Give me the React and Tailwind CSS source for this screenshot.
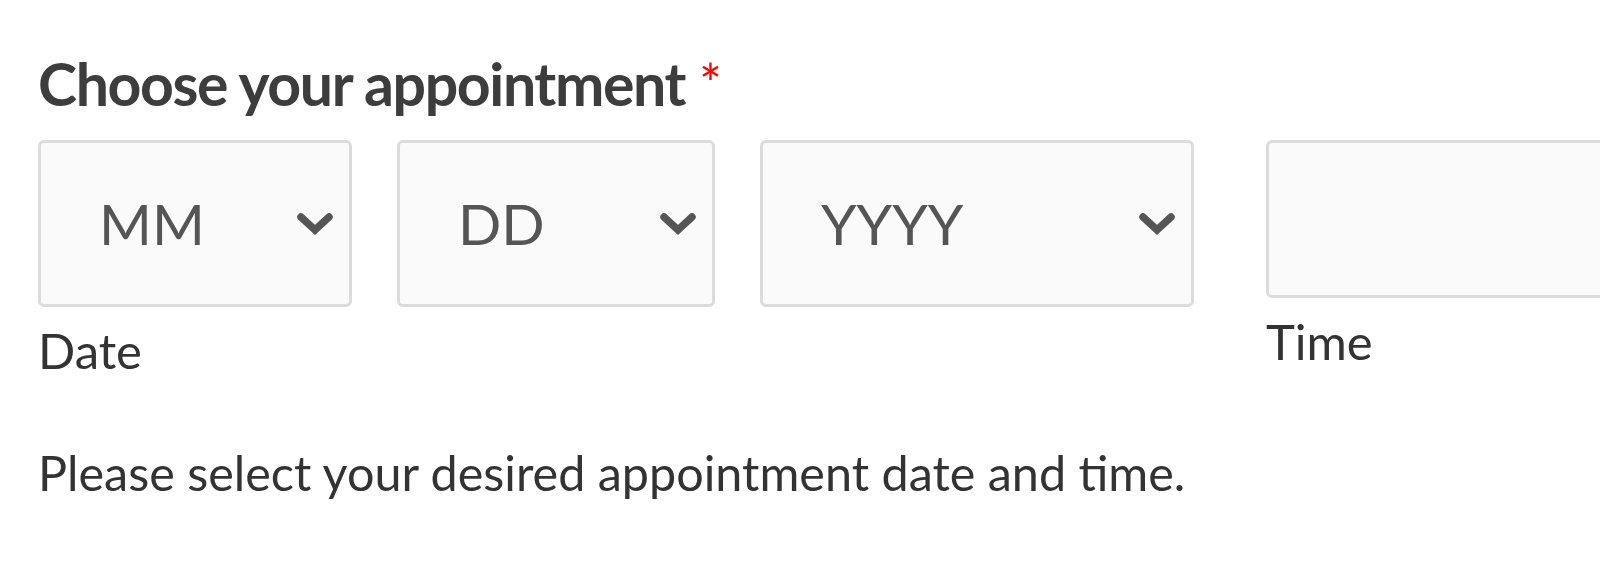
export default function App() {
  return (
    <div className="w-[1600px] h-[561px] overflow-hidden bg-white font-['Lato',sans-serif]">
      <div className="pl-[38px] pt-[51px]">
        <div className="flex items-start text-[59px] font-bold text-[#3d3d3d] leading-[66px] tracking-[-1.4px]">
          Choose your appointment
          <span className="ml-[14px] mt-[5px] text-[54px] leading-[54px] font-normal tracking-normal text-[#ff0000]">*</span>
        </div>

        <div className="flex items-start mt-[23px]">
          <div className="flex flex-col">
            <div className="flex gap-[45px]">
              <SelectBox label="MM" width="w-[314px]" />
              <SelectBox label="DD" width="w-[318px]" />
              <SelectBox label="YYYY" width="w-[434px]" />
            </div>
            <div className="mt-[14px] text-[49px] leading-[58px] text-[#333333]">Date</div>
          </div>

          <div className="flex flex-col ml-[72px]">
            <div className="w-[420px] h-[158px] rounded-[6px] border-[3px] border-[#dcdcdc] bg-[#fafafa]" />
            <div className="mt-[14px] text-[49px] leading-[58px] text-[#333333]">Time</div>
          </div>
        </div>

        <p className="mt-[64px] text-[48.5px] leading-[58px] text-[#333333]">
          Please select your desired appointment date and time.
        </p>
      </div>
    </div>
  );
}

function SelectBox({ label, width }) {
  return (
    <div className={`${width} h-[167px] flex items-center justify-between pl-[58px] pr-[15px] rounded-[6px] border-[3px] border-[#dcdcdc] bg-[#fafafa]`}>
      <span className="text-[57px] leading-none text-[#555555]">{label}</span>
      <svg className="w-[38px] h-[26px]" viewBox="0 0 38 26" fill="none" stroke="#555555" strokeWidth="7.5" strokeLinecap="round" strokeLinejoin="miter">
        <path d="M5 6 L19 19 L33 6" />
      </svg>
    </div>
  );
}
